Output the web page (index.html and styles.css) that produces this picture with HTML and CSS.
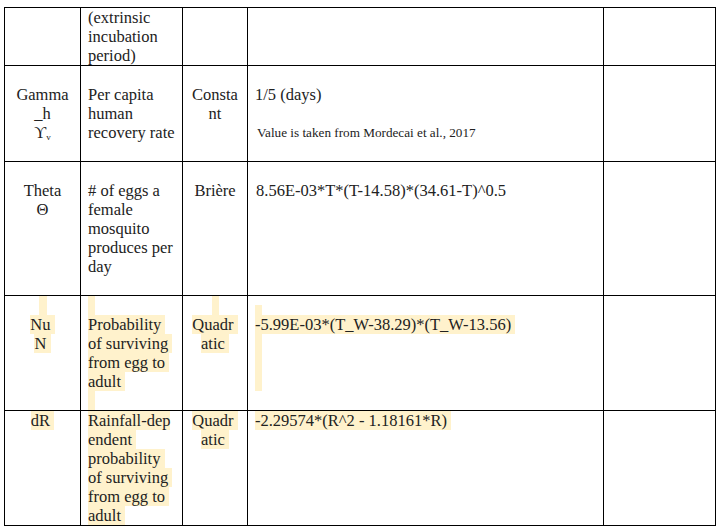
FILE: index.html
```html
<!DOCTYPE html>
<html lang="en">
<head>
<meta charset="utf-8">
<title>Parameters</title>
<link rel="stylesheet" href="styles.css">
</head>
<body>
<div class="doc">
<table class="params">
  <colgroup>
    <col class="c1"><col class="c2"><col class="c3"><col class="c4"><col class="c5">
  </colgroup>
  <tr class="r1">
    <td class="mid"></td>
    <td>
      <div class="ln">(extrinsic</div>
      <div class="ln">incubation</div>
      <div class="ln">period)</div>
    </td>
    <td class="mid"></td>
    <td></td>
    <td></td>
  </tr>
  <tr>
    <td class="mid">
      <div class="ln"></div>
      <div class="ln">Gamma</div>
      <div class="ln">_h</div>
      <div class="ln">ϒ<sub class="sub">v</sub></div>
    </td>
    <td>
      <div class="ln"></div>
      <div class="ln">Per capita</div>
      <div class="ln">human</div>
      <div class="ln">recovery rate</div>
    </td>
    <td class="mid">
      <div class="ln"></div>
      <div class="ln">Consta</div>
      <div class="ln">nt</div>
    </td>
    <td class="formula">
      <div class="ln"></div>
      <div class="ln">1/5 (days)</div>
      <div class="ln"></div>
      <div class="ln small">Value is taken from Mordecai et al., 2017</div>
      <div class="ln"></div>
    </td>
    <td></td>
  </tr>
  <tr>
    <td class="mid">
      <div class="ln"></div>
      <div class="ln">Theta</div>
      <div class="ln">Θ</div>
    </td>
    <td>
      <div class="ln"></div>
      <div class="ln"># of eggs a</div>
      <div class="ln">female</div>
      <div class="ln">mosquito</div>
      <div class="ln">produces per</div>
      <div class="ln">day</div>
      <div class="ln"></div>
    </td>
    <td class="mid">
      <div class="ln"></div>
      <div class="ln">Brière</div>
    </td>
    <td class="formula">
      <div class="ln"></div>
      <div class="ln indent">8.56E-03*T*(T-14.58)*(34.61-T)^0.5</div>
    </td>
    <td></td>
  </tr>
  <tr>
    <td class="mid">
      <div class="ln"><span class="stub wide"></span></div>
      <div class="ln"><span class="hl">Nu&nbsp;</span></div>
      <div class="ln"><span class="hl">N&nbsp;</span></div>
    </td>
    <td>
      <div class="ln"><span class="stub"></span></div>
      <div class="ln"><span class="hl">Probability&nbsp;</span></div>
      <div class="ln"><span class="hl">of surviving&nbsp;</span></div>
      <div class="ln"><span class="hl">from egg to&nbsp;</span></div>
      <div class="ln"><span class="hl">adult&nbsp;</span></div>
      <div class="ln"><span class="stub"></span></div>
    </td>
    <td class="mid">
      <div class="ln"><span class="stub"></span></div>
      <div class="ln"><span class="hl">Quadr&nbsp;</span></div>
      <div class="ln"><span class="hl">atic&nbsp;</span></div>
    </td>
    <td class="formula">
      <div class="ln"><span class="stub half"></span></div>
      <div class="ln"><span class="hl">-5.99E-03*(T_W-38.29)*(T_W-13.56)&nbsp;</span></div>
      <div class="ln"><span class="stub"></span></div>
      <div class="ln"><span class="stub"></span></div>
      <div class="ln"><span class="stub"></span></div>
    </td>
    <td></td>
  </tr>
  <tr>
    <td class="mid">
      <div class="ln"><span class="hl">dR&nbsp;</span></div>
    </td>
    <td>
      <div class="ln"><span class="hl">Rainfall-dep</span></div>
      <div class="ln"><span class="hl">endent&nbsp;</span></div>
      <div class="ln"><span class="hl">probability&nbsp;</span></div>
      <div class="ln"><span class="hl">of surviving&nbsp;</span></div>
      <div class="ln"><span class="hl">from egg to&nbsp;</span></div>
      <div class="ln"><span class="hl">adult&nbsp;</span></div>
    </td>
    <td class="mid">
      <div class="ln"><span class="hl">Quadr&nbsp;</span></div>
      <div class="ln"><span class="hl">atic&nbsp;</span></div>
    </td>
    <td class="formula">
      <div class="ln"><span class="hl">-2.29574*(R^2 - 1.18161*R)&nbsp;</span></div>
    </td>
    <td></td>
  </tr>
</table>
</div>
</body>
</html>
```

FILE: styles.css
```css
html, body {
  margin: 0;
  padding: 0;
  background: #ffffff;
}

body {
  font-family: "Liberation Serif", "Times New Roman", "DejaVu Serif", serif;
  color: #222222;
}

.doc {
  padding: 7px 0 0 4px;
}

.params {
  border-collapse: collapse;
  table-layout: fixed;
  width: 711px;
}

.c1 { width: 76px; }
.c2 { width: 102px; }
.c3 { width: 65px; }
.c4 { width: 356px; }
.c5 { width: 112px; }

.params td {
  border: 1px solid #000000;
  vertical-align: top;
  padding: 0 0 0 7px;
  font-size: 16.5px;
  line-height: 19px;
  white-space: nowrap;
  overflow: hidden;
}

.params td.mid {
  text-align: center;
  padding: 0;
}

.params td.formula {
  padding-left: 7px;
}

.ln {
  height: 19px;
}

.small {
  font-size: 13.2px;
  padding-left: 2px;
}

.indent {
  padding-left: 1px;
}

.sub {
  font-size: 9px;
  vertical-align: -2px;
  line-height: 0;
}

.hl {
  background: #fff2cc;
}

.stub {
  display: inline-block;
  width: 7px;
  height: 19px;
  vertical-align: top;
  background: #fff2cc;
}

.stub.wide {
  width: 8px;
}

.stub.half {
  height: 10px;
  vertical-align: bottom;
}
```
